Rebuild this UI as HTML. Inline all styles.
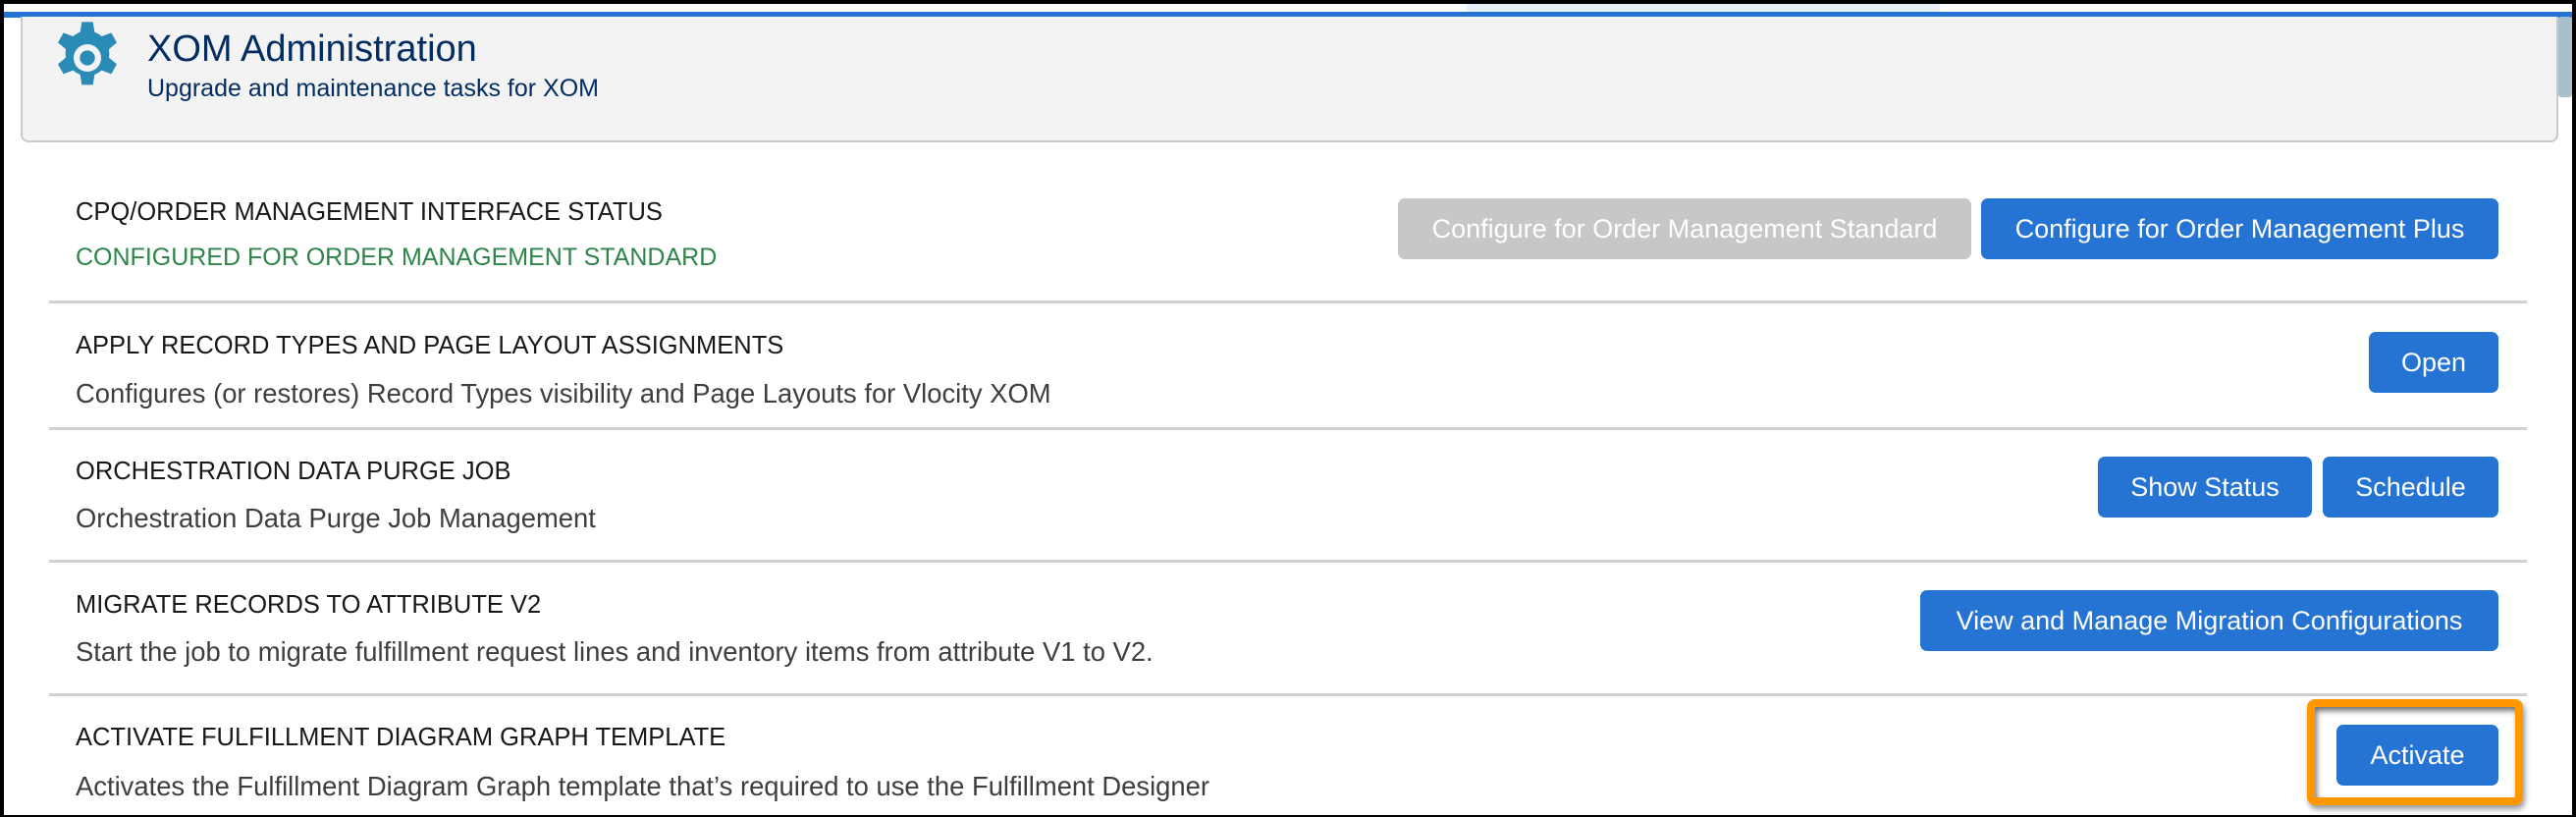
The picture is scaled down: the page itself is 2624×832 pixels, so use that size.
<!DOCTYPE html>
<html><head><meta charset="utf-8"><style>
*{margin:0;padding:0;box-sizing:border-box}
body{width:2624px;height:832px;background:#000;position:relative;overflow:hidden;font-family:"Liberation Sans",sans-serif}
#pg{position:absolute;left:4px;top:4px;width:2616px;height:826px;background:#fff;overflow:hidden}
.a{position:absolute}
.blue{left:0;top:8px;width:2616px;height:6px;background:#2574d4}
.hdr{left:17px;top:13px;width:2585px;height:128px;background:#f3f3f3;border:2px solid #c9c9c9;border-top:none;border-radius:0 0 8px 8px}
.t1{left:146px;top:25px;font-size:38px;color:#032d60;white-space:nowrap}
.t2{left:146px;top:72px;font-size:25px;color:#032d60;white-space:nowrap}
.rt{left:73px;font-size:25.5px;color:#181818;white-space:nowrap}
.rs{left:73px;font-size:27.4px;color:#3e3e3c;white-space:nowrap}
.div{left:46px;width:2524px;height:3px;background:#d0d0d0}
.btn{background:#2574d4;color:#fff;font-size:27px;border-radius:7px;display:flex;align-items:center;justify-content:center;white-space:nowrap;height:62px}
.gray{background:#c9c7c5}
</style></head><body><div id="pg">
<div class="a" style="left:1490px;top:0;width:482px;height:8px;background:#e8f0fa"></div>
<div class="a blue"></div>
<div class="a hdr"></div>
<div class="a" style="left:2602px;top:13px;width:14px;height:82px;background:#a9bfcc;border-radius:3px"></div>
<svg class="a" style="left:45px;top:15px" width="80" height="80" viewBox="0 0 24 24"><path fill="#2a8cb6" fill-rule="evenodd" d="M10.3 1h3.4l.5 3.1a8 8 0 0 1 2.2 1.3l2.9-1.1 1.7 3-2.4 2a8 8 0 0 1 0 2.6l2.4 2-1.7 3-2.9-1.1a8 8 0 0 1-2.2 1.3l-.5 3.1h-3.4l-.5-3.1a8 8 0 0 1-2.2-1.3l-2.9 1.1-1.7-3 2.4-2a8 8 0 0 1 0-2.6l-2.4-2 1.7-3 2.9 1.1a8 8 0 0 1 2.2-1.3zM12 7.8a4.2 4.2 0 1 0 0 8.4a4.2 4.2 0 1 0 0-8.4zM12 9.7a2.3 2.3 0 1 1 0 4.6a2.3 2.3 0 1 1 0-4.6z"/></svg>
<div class="a t1">XOM Administration</div>
<div class="a t2">Upgrade and maintenance tasks for XOM</div>

<div class="a rt" style="top:198px">CPQ/ORDER MANAGEMENT INTERFACE STATUS</div>
<div class="a rs" style="top:244px;font-size:25px;color:#2e844a">CONFIGURED FOR ORDER MANAGEMENT STANDARD</div>
<div class="a btn gray" style="left:1420px;top:198px;width:584px">Configure for Order Management Standard</div>
<div class="a btn" style="left:2014px;top:198px;width:527px">Configure for Order Management Plus</div>
<div class="a div" style="top:302px"></div>

<div class="a rt" style="top:334px">APPLY RECORD TYPES AND PAGE LAYOUT ASSIGNMENTS</div>
<div class="a rs" style="top:381px">Configures (or restores) Record Types visibility and Page Layouts for Vlocity XOM</div>
<div class="a btn" style="left:2409px;top:334px;width:132px">Open</div>
<div class="a div" style="top:431px"></div>

<div class="a rt" style="top:462px">ORCHESTRATION DATA PURGE JOB</div>
<div class="a rs" style="top:508px">Orchestration Data Purge Job Management</div>
<div class="a btn" style="left:2133px;top:461px;width:218px">Show Status</div>
<div class="a btn" style="left:2362px;top:461px;width:179px">Schedule</div>
<div class="a div" style="top:566px"></div>

<div class="a rt" style="top:598px">MIGRATE RECORDS TO ATTRIBUTE V2</div>
<div class="a rs" style="top:644px">Start the job to migrate fulfillment request lines and inventory items from attribute V1 to V2.</div>
<div class="a btn" style="left:1952px;top:597px;width:589px">View and Manage Migration Configurations</div>
<div class="a div" style="top:702px"></div>

<div class="a rt" style="top:733px">ACTIVATE FULFILLMENT DIAGRAM GRAPH TEMPLATE</div>
<div class="a rs" style="top:781px">Activates the Fulfillment Diagram Graph template that’s required to use the Fulfillment Designer</div>
<div class="a" style="left:2346px;top:708px;width:220px;height:108px;border:8px solid #ff9800;border-radius:8px;box-shadow:inset 2px 4px 6px rgba(0,0,0,.55),2px 4px 6px rgba(0,0,0,.4)"></div>
<div class="a btn" style="left:2376px;top:734px;width:165px">Activate</div>
</div></body></html>
